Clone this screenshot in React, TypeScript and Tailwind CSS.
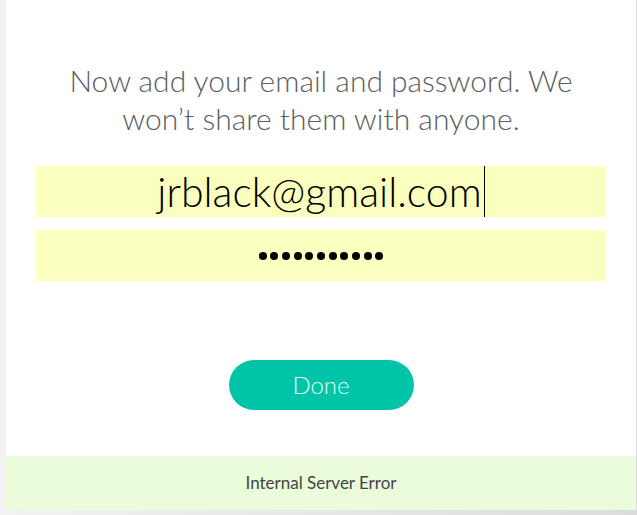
const font = { fontFamily: '"Source Sans Pro", Lato, "Liberation Sans", sans-serif' }

function App() {
  return (
    <div className="w-full h-[515px] bg-gradient-to-r from-[#f2f2f4] to-[#dcdcdf] pl-[6px] pr-[1px] pb-[5px]" style={font}>
      <div className="h-full bg-white flex flex-col">
        <h1 className="pt-[61px] px-[60px] text-center text-[30px] leading-[38px] font-light text-[#5b6060]">
          Now add your email and password. We won’t share them with anyone.
        </h1>

        <div className="mx-[30px] mt-[29px] h-[51px] bg-[#faffbd] flex items-center justify-center">
          <span className="text-[41px] font-light text-black leading-none">jrblack@gmail.com</span>
          <span className="w-px h-[51px] bg-black ml-[2px]"></span>
        </div>

        <div className="mx-[30px] mt-[13px] h-[51px] bg-[#faffbd] flex items-center justify-center gap-[3.7px]">
          {Array.from({ length: 11 }).map((_, i) => (
            <span key={i} className="w-[8px] h-[8px] rounded-full bg-black"></span>
          ))}
        </div>

        <div className="mt-[79px] flex justify-center">
          <button className="w-[185px] h-[50px] rounded-full bg-[#00c4a8] text-[#e6fff9] text-[24px] font-light">
            Done
          </button>
        </div>

        <div className="flex-1"></div>

        <div className="h-[54px] bg-[#eafcd9] flex items-center justify-center text-[17px] text-[#444]">
          Internal Server Error
        </div>
      </div>
    </div>
  )
}

export default App
